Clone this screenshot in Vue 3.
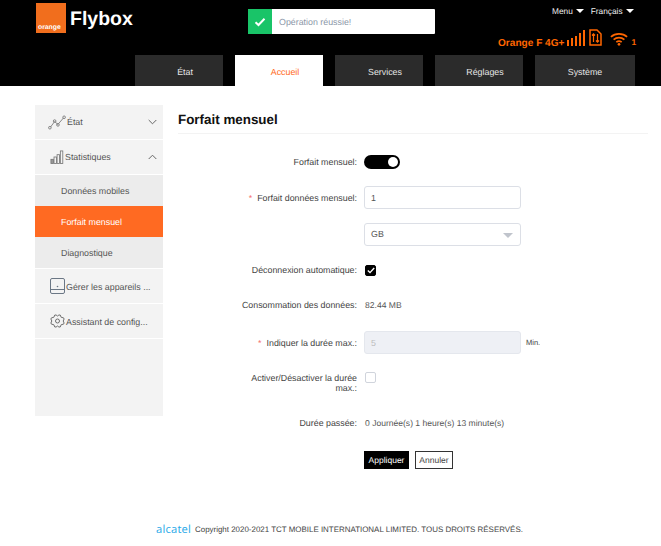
<script setup>
const tabs = [
  { label: 'État', w: 88, shift: 12 },
  { label: 'Accueil', w: 88, active: true, shift: 12 },
  { label: 'Services', w: 88, shift: 12 },
  { label: 'Réglages', w: 88, shift: 12 },
  { label: 'Système', w: 100, shift: 0 }
]
</script>

<template>
  <div class="page">
    <header class="header">
      <div class="top">
        <div class="brand">
          <div class="logo"><span>orange</span></div>
          <div class="flybox">Flybox</div>
        </div>
        <div class="toast">
          <div class="toast-ic">
            <svg width="12" height="10" viewBox="0 0 12 10"><path d="M1.500 5.200 4.500 8l6-6.200" fill="none" stroke="#fff" stroke-width="2"/></svg>
          </div>
          <div class="toast-text">Opération réussie!</div>
        </div>
        <div class="right">
          <div class="links">
            <span>Menu</span><i class="tri"></i>
            <span class="fr">Français</span><i class="tri"></i>
          </div>
          <div class="status">
            <span class="net">Orange F 4G+</span>
            <svg class="bars" width="18" height="16" viewBox="0 0 18 16">
              <g fill="#f60">
                <rect x="0" y="10" width="2" height="6"/><rect x="4" y="8" width="2" height="8"/><rect x="8" y="6" width="2" height="10"/><rect x="12" y="3" width="2" height="13"/><rect x="16" y="0" width="2" height="16"/>
              </g>
            </svg>
            <svg class="sim" width="13" height="17" viewBox="0 0 13 17">
              <path d="M1 1h7l4 4v11H1z" fill="none" stroke="#f60" stroke-width="1.500"/>
              <path d="M4.500 13V5M3 6.500 4.500 4.800 6 6.500M8.500 5v8M7 11.500l1.500 1.700 1.500-1.700" fill="none" stroke="#f60" stroke-width="1.200"/>
            </svg>
            <svg class="wifi" width="18" height="14" viewBox="0 0 20 15">
              <g fill="none" stroke="#f60" stroke-width="1.900">
                <path d="M1 5.200C6 .6 14 .6 19 5.200"/><path d="M4 8.200C7.500 5.200 12.500 5.200 16 8.200"/><path d="M7 11C8.800 9.600 11.200 9.600 13 11"/>
              </g>
              <circle cx="10" cy="13.400" r="1.500" fill="#f60"/>
            </svg>
            <span class="one">1</span>
          </div>
        </div>
      </div>
      <nav class="tabs">
        <div v-for="t in tabs" :key="t.label" class="tab" :class="{ active: t.active }" :style="{ width: t.w + 'px', paddingLeft: t.shift + 'px' }">{{ t.label }}</div>
      </nav>
    </header>

    <div class="body">
      <aside class="side">
        <div class="item">
          <svg class="ic" width="18" height="15" viewBox="0 0 19 15">
            <g fill="none" stroke="#777" stroke-width="0.900">
              <path d="M2.500 12.500 7 6.500l3.500 3L16.500 2.500"/>
              <circle cx="2" cy="13" r="1.400"/><circle cx="7" cy="6" r="1.400"/><circle cx="10.500" cy="10" r="1.400"/><circle cx="17" cy="2" r="1.400"/>
            </g>
          </svg>
          <span class="it">État</span>
          <svg class="chev" width="9" height="6" viewBox="0 0 9 6"><path d="M.7 1 4.500 4.800 8.300 1" fill="none" stroke="#666" stroke-width="1"/></svg>
        </div>
        <div class="item">
          <svg class="ic ic2" width="14" height="14" viewBox="0 0 14 15">
            <g fill="none" stroke="#777" stroke-width="0.900">
              <rect x="0.500" y="10" width="2.600" height="4.500" fill="#999"/><rect x="3.800" y="7.500" width="2.600" height="7"/><rect x="7.100" y="5" width="2.600" height="9.500"/><rect x="10.600" y="1" width="2.600" height="13.500"/>
            </g>
          </svg>
          <span class="it">Statistiques</span>
          <svg class="chev" width="9" height="6" viewBox="0 0 9 6"><path d="M.7 5 4.500 1.200 8.300 5" fill="none" stroke="#666" stroke-width="1"/></svg>
        </div>
        <div class="sub">Données mobiles</div>
        <div class="sub on">Forfait mensuel</div>
        <div class="sub last">Diagnostique</div>
        <div class="item">
          <svg class="ic ic3" width="15" height="16" viewBox="0 0 15 16">
            <g fill="none" stroke="#6b7785" stroke-width="1">
              <rect x="0.500" y="0.500" width="14" height="15" rx="1.500"/><path d="M0.500 11.500h14"/>
            </g>
            <circle cx="7.500" cy="8.500" r="0.800" fill="#6b7785"/>
          </svg>
          <span class="it low">Gérer les appareils ...</span>
        </div>
        <div class="item">
          <svg class="ic ic3" width="15" height="14" viewBox="0 0 15 14">
            <g fill="none" stroke="#6f6f6f" stroke-width="1" stroke-linejoin="round">
              <path d="M4.800 1h1.300L7.500 2 8.900 1h1.300l1 2.300 2.300.5.600 1.200L13.200 7l.9 2-.6 1.200-2.300.5-1 2.300H8.900L7.500 12 6.100 13H4.800l-1-2.300-2.300-.5L.9 9l.9-2-.9-2 .6-1.200 2.300-.5z"/>
              <circle cx="7.500" cy="7" r="2"/>
            </g>
          </svg>
          <span class="it low">Assistant de config...</span>
        </div>
      </aside>

      <main class="main">
        <h1 class="title">Forfait mensuel</h1>
        <form class="form" @submit.prevent>
          <div class="row r1">
            <label class="lab">Forfait mensuel:</label>
            <div class="toggle"><i></i></div>
          </div>
          <div class="row r2">
            <label class="lab"><b class="req">*</b>Forfait données mensuel:</label>
            <div class="input">1</div>
          </div>
          <div class="row r3">
            <label class="lab"></label>
            <div class="input sel">GB<i class="caret"></i></div>
          </div>
          <div class="row r4">
            <label class="lab">Déconnexion automatique:</label>
            <div class="check on">
              <svg width="8" height="7" viewBox="0 0 8 7"><path d="M.8 3.600 3 5.600 7.200 1" fill="none" stroke="#fff" stroke-width="1.400"/></svg>
            </div>
          </div>
          <div class="row r5">
            <label class="lab">Consommation des données:</label>
            <div class="val">82.44 MB</div>
          </div>
          <div class="row r6">
            <label class="lab"><b class="req">*</b>Indiquer la durée max.:</label>
            <div class="input dis">5</div>
            <span class="unit">Min.</span>
          </div>
          <div class="row r7">
            <label class="lab two">Activer/Désactiver la durée max.:</label>
            <div class="check"></div>
          </div>
          <div class="row r8">
            <label class="lab">Durée passée:</label>
            <div class="val">0 Journée(s) 1 heure(s) 13 minute(s)</div>
          </div>
          <div class="btns">
            <button class="btn pri" type="button">Appliquer</button>
            <button class="btn" type="button">Annuler</button>
          </div>
        </form>
      </main>
    </div>

    <footer class="foot">
      <span class="alc">alcatel</span>
      <span>Copyright 2020-2021 TCT MOBILE INTERNATIONAL LIMITED. TOUS DROITS RÉSERVÉS.</span>
    </footer>
  </div>
</template>

<style>
html, body { margin: 0; background: #fff; }
</style>

<style scoped>
.page { width: 661px; height: 546px; overflow: hidden; font-family: "Liberation Sans", Arial, sans-serif; color: #444; font-size: 8.850px; position: relative; text-rendering: geometricPrecision; }
.header { background: #000; height: 86px; display: flex; flex-direction: column; }
.top { height: 55px; display: flex; }
.brand { display: flex; margin: 3px 0 0 36px; width: 212px; }
.logo { width: 30px; height: 30px; background: #f16e1d; position: relative; }
.logo span { position: absolute; left: 2px; bottom: 1px; color: #fff; font-size: 6.800px; font-weight: 700; line-height: 8px; }
.flybox { margin: 4px 0 0 4px; color: #fff; font-size: 19.500px; font-weight: 700; line-height: 24px; }
.toast { width: 187px; height: 25px; margin-top: 9px; background: #fff; display: flex; align-items: center; border-radius: 1px; }
.toast-ic { width: 24px; height: 25px; background: #19c468; display: flex; align-items: center; justify-content: center; }
.toast-text { margin-left: 7px; color: #8c97a8; }
.right { flex: 1; position: relative; }
.links { position: absolute; left: 117px; top: 5px; display: flex; align-items: center; color: #eee; font-size: 8.300px; line-height: 12px; }
.fr { margin-left: 7px; }
.tri { display: inline-block; width: 0; height: 0; margin-left: 3px; border: 4.500px solid transparent; border-top: 4px solid #fff; border-bottom: 0; }
.status { position: absolute; left: 63px; top: 30px; display: flex; align-items: flex-end; height: 16px; color: #f60; font-weight: 700; }
.net { font-size: 10.100px; line-height: 12px; margin-bottom: -4px; }
.bars { margin: 0 0 0 3px; flex: none; }
.sim { margin: 0 0 0 4px; flex: none; }
.wifi { margin: 0 0 0 8px; flex: none; }
.one { font-size: 8.500px; line-height: 10px; margin: 0 0 -1px 3px; }
.tabs { height: 31px; display: flex; gap: 12px; padding-left: 135px; }
.tab { height: 31px; box-sizing: border-box; padding-top: 2px; background: #2b2b2b; color: #e6e6e6; display: flex; align-items: center; justify-content: center; }
.tab.active { background: #fff; color: #ff6a22; }
.body { display: flex; padding: 19px 0 0 35px; }
.side { width: 128px; height: 311px; background: #f3f3f3; flex: none; }
.item { height: 34px; border-bottom: 1px solid #fff; display: flex; align-items: center; position: relative; color: #555; }
.ic { margin-left: 13px; flex: none; }
.ic2 { margin-left: 15px; }
.ic3 { margin-left: 15px; }
.it { margin-left: 1px; white-space: nowrap; }
.low { margin-top: 2px; }
.chev { position: absolute; right: 6px; top: 14px; }
.sub { height: 31px; line-height: 33px; padding-left: 26px; background: #ececec; color: #555; }
.sub.on { background: #ff6a22; color: #fff; }
.sub.last { border-bottom: 1px solid #fff; }
.main { width: 470px; margin-left: 15px; }
.title { margin: 0; height: 28px; line-height: 29px; font-size: 13.400px; font-weight: 700; color: #111; border-bottom: 1px solid #f3f3f3; }
.form { display: flex; flex-direction: column; }
.row { display: flex; align-items: center; }
.lab { width: 179px; margin-right: 7px; text-align: right; line-height: 12px; color: #444; flex: none; }
.req { color: #f56c6c; font-weight: 400; margin-right: 5px; }
.r1 { margin-top: 21px; height: 14px; }
.r2 { margin-top: 17px; height: 23px; }
.r3 { margin-top: 14px; height: 23px; }
.r4 { margin-top: 18px; height: 12px; }
.r5 { margin-top: 23px; height: 12px; }
.r6 { margin-top: 20px; height: 23px; }
.r7 { margin-top: 18px; height: 24px; align-items: flex-start; }
.r8 { margin-top: 21px; height: 12px; }
.two { box-sizing: border-box; padding-left: 70px; line-height: 10px; padding-top: 1px; }
.toggle { width: 36px; height: 14px; background: #000; border-radius: 7px; position: relative; }
.toggle i { position: absolute; right: 2px; top: 2px; width: 10px; height: 10px; background: #fff; border-radius: 50%; }
.input { width: 157px; height: 23px; box-sizing: border-box; border: 1px solid #dcdfe6; border-radius: 3px; padding-left: 6px; line-height: 22px; color: #555; position: relative; background: #fff; }
.sel { line-height: 20px; }
.sel .caret { position: absolute; right: 7px; top: 9px; border: 5px solid transparent; border-top: 5px solid #c0c4cc; border-bottom: 0; }
.dis { background: #eef0f5; border-color: #e4e7ed; color: #bbb; }
.unit { margin-left: 5px; font-size: 7.500px; line-height: 23px; }
.check { width: 11px; height: 11px; margin-left: 1px; box-sizing: border-box; border: 1px solid #d0d4dc; border-radius: 2px; background: #fff; display: flex; align-items: center; justify-content: center; }
.check.on { background: #000; border-color: #000; }
.val { color: #555; margin-left: 1px; font-size: 8.550px; }
.btns { display: flex; gap: 6px; margin: 22px 0 0 186px; }
.btn { height: 18px; padding: 0; font: 8.500px "Liberation Sans", Arial, sans-serif; text-rendering: geometricPrecision; color: #444; background: #fff; border: 1px solid #333; width: 38px; }
.btn.pri { width: 45px; background: #000; border-color: #000; color: #fff; }
.foot { position: absolute; left: 156px; top: 523px; display: flex; align-items: center; gap: 3px; color: #444; font-size: 7.950px; line-height: 14px; white-space: nowrap; }
.alc { color: #1fa8e8; width: 36px; font-size: 11.200px; letter-spacing: 0.200px; font-family: "Open Sans", sans-serif; font-weight: 400; }
</style>
